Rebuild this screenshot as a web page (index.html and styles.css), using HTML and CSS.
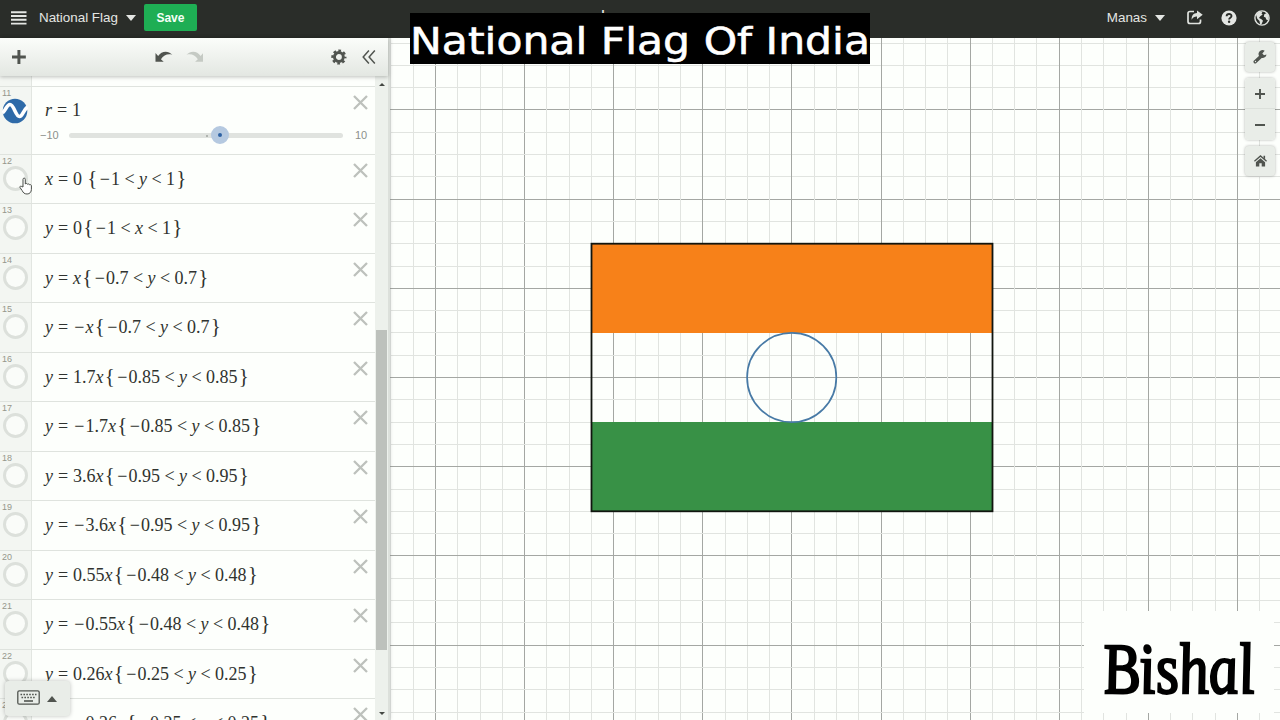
FILE: index.html
```html
<!DOCTYPE html>
<html lang="en">
<head>
  <meta charset="UTF-8">
  <meta name="viewport" content="width=device-width, initial-scale=1.0">
  <title>National Flag</title>
  <link rel="stylesheet" href="styles.css">
</head>
<body>
  <div class="app">
    <!-- Header -->
    <header class="header">
      <div class="header-side">
        <svg class="menu-icon" width="16" height="14" viewBox="0 0 16 14"><path d="M0 1.300h15.500M0 5h15.500M0 8.800h15.500M0 12.600h15.500" stroke="#e4e6e3" stroke-width="1.900"/></svg>
        <span class="graph-title">National Flag</span>
        <span class="caret"></span>
        <button class="save">Save</button>
      </div>
      <span class="brand">desmos</span>
      <div class="header-side account">
        <span class="user">Manas</span>
        <span class="caret"></span>
        <svg class="share-icon" width="16" height="15" viewBox="0 0 16 15"><path d="M7 1.500H3Q1 1.500 1 3.500v8q0 2 2 2h8.500q2 0 2-2V9.500" fill="none" stroke="#dfe2de" stroke-width="1.700"/><path d="M10 .5l5.700 4.300L10 9.300V6.600C7.500 6.500 6 7.300 4.600 9.800 4.600 5.500 6.500 3.300 10 3.100z" fill="#dfe2de"/></svg>
        <svg class="help-icon" width="16" height="16" viewBox="0 0 16 16"><circle cx="8" cy="8" r="7.600" fill="#e4e6e3"/><path d="M5.600 6.200C5.700 3.300 10.500 3.300 10.500 6c0 1.700-2.400 1.700-2.400 3.500" fill="none" stroke="#2a2d29" stroke-width="1.900"/><circle cx="8.100" cy="11.800" r="1.200" fill="#2a2d29"/></svg>
        <svg width="16" height="16" viewBox="0 0 16 16"><circle cx="8" cy="8" r="7.100" fill="none" stroke="#dfe2de" stroke-width="1.400"/><path d="M2 4.500L5 1.500l3.500.3-1 1.700 1.200 1-2.500 1.700L5 8l2.500 1.200 1.500 1.600-1.500 3.400-1.400.3-.6-3.500L3.300 8.700z M10.300 4.200l2.500-1.300 2 3.300-.6 4-2-.6-.6-2-1.800-.8z" fill="#dfe2de"/></svg>
      </div>
    </header>

    <main class="main">
      <!-- Expression list -->
      <section class="panel">
        <div class="toolbar">
          <svg class="tool-add" width="14" height="14" viewBox="0 0 14 14"><path d="M7 0v14M0 7h14" stroke="#50544f" stroke-width="3"/></svg>
          <svg class="tool-undo" width="18" height="12" viewBox="0 0 18 12"><path d="M.5 2v8.800h8.300L6 8.200C9 4 12.500 2.600 17.500 3.700 13-1 6.500 0 3.200 4.900z" fill="#50544f"/></svg>
          <svg class="tool-redo" width="18" height="12" viewBox="0 0 18 12"><path d="M17.500 2v8.800H9.200L12 8.200C9 4 5.500 2.600.5 3.700 5-1 11.500 0 14.800 4.900z" fill="#c5cac4"/></svg>
          <svg class="tool-gear" width="16" height="16" viewBox="0 0 16 16"><circle cx="8" cy="8" r="4.500" fill="none" stroke="#50544f" stroke-width="3"/><circle cx="8" cy="8" r="6.500" fill="none" stroke="#50544f" stroke-width="2.400" stroke-dasharray="2.700 2.405" stroke-dashoffset="1.350"/></svg>
          <svg class="tool-hide" width="14" height="14" viewBox="0 0 14 14"><path d="M7 .5L1.200 7 7 13.500M13 .5L7.200 7l5.800 6.500" fill="none" stroke="#50544f" stroke-width="1.500"/></svg>
        </div>
        <div class="list-wrap">
          <div class="list" id="list">
            <div class="row row-stub"><div class="gutter"></div></div>
            <div class="row row-slider">
              <div class="gutter"><span class="num">11</span>
                <svg class="wave" width="26" height="26" viewBox="0 0 26 26"><circle cx="13" cy="13" r="12.300" fill="#2e6aa8"/><path d="M.5 15C4 11.500 5 6.500 8 6.500c4 0 5.500 12 9.500 12 3 0 3.500-6 8-9.500" fill="none" stroke="#fff" stroke-width="3.600"/></svg>
              </div>
              <div class="slider-body">
                <div class="math"><i>r</i><b class="eq">=</b>1</div>
                <div class="slider">
                  <span class="limit">−10</span>
                  <span class="track"><span class="zero"></span><span class="thumb"></span></span>
                  <span class="limit">10</span>
                </div>
              </div>
              <svg class="close" width="15" height="15" viewBox="0 0 15 15"><path d="M1 1l13 13M14 1L1 14"/></svg>
            </div>
          </div>
          <div class="scrollbar"><span class="arrow-up"></span><span class="scroll-thumb"></span><span class="arrow-down"></span></div>
        </div>
        <div class="keypad">
          <svg width="24" height="15" viewBox="0 0 24 15"><rect x=".8" y=".8" width="21.400" height="13.400" rx="1.500" fill="none" stroke="#50544f" stroke-width="1.300"/><path d="M3.500 4.500h16M4.500 7.500h14" stroke="#50544f" stroke-width="1.700" stroke-dasharray="1.600 1.300"/><path d="M7 11h9" stroke="#50544f" stroke-width="1.600"/></svg>
          <span class="keypad-up"></span>
        </div>
      </section>

      <!-- Graph paper -->
      <section class="graph">
        <svg class="plot" width="890" height="682" viewBox="390 38 890 682">
          <g id="grid"></g>
          <rect x="591.500" y="243.500" width="401" height="89.500" fill="#f78119"/>
          <rect x="591.500" y="422" width="401" height="89.500" fill="#389146"/>
          <rect x="591.500" y="243.700" width="401" height="267.600" fill="none" stroke="#11150f" stroke-width="1.800"/>
          <circle cx="791.700" cy="377.500" r="44.600" fill="none" stroke="#487aa6" stroke-width="1.700"/>
        </svg>
        <div class="graph-tools">
          <div class="tool-box"><svg width="14" height="14" viewBox="0 0 14 14"><path d="M2.200 11.800L8.400 6" stroke="#50544f" stroke-width="3.400" stroke-linecap="round"/><path d="M11.700.7A4 4 0 1 0 13.500 4.500L11 5.200 9.300 3.500z" fill="#50544f"/><circle cx="2.500" cy="11.500" r=".7" fill="#e9ede8"/></svg></div>
          <div class="tool-box zoom">
            <svg width="10" height="10" viewBox="0 0 10 10"><path d="M5 0v10M0 5h10" stroke="#50544f" stroke-width="1.900"/></svg>
            <svg width="10" height="10" viewBox="0 0 10 10"><path d="M0 5h10" stroke="#50544f" stroke-width="2"/></svg>
          </div>
          <div class="tool-box"><svg width="13" height="12" viewBox="0 0 13 12"><path d="M.4 6.300L6.500 1l6.100 5.300" fill="none" stroke="#50544f" stroke-width="1.400"/><path d="M9.500.8h1.600v3.700L9.500 3z M6.500 3.200l4.600 4V11.500H7.700V8.300H5.300v3.200H1.900V7.200z" fill="#50544f"/></svg></div>
        </div>
      </section>
    </main>

    <svg class="cursor" width="14" height="18" viewBox="0 0 14 18"><path d="M4 10V2.400c0-1.800 2.300-1.800 2.300 0V7c.4-.8 2-.8 2.200.3.600-.7 1.900-.4 2 .5.700-.5 1.900-.1 1.900 1v3.500c0 2.600-1.600 4.700-4.300 4.700-2.800 0-3.900-1.300-5-3.500L1 10.500c-.5-1.200.8-1.800 1.600-1z" fill="#fff" stroke="#4b4f4a" stroke-width="1"/></svg>

    <!-- Video captions -->
    <div class="caption">
      <svg width="460" height="51" viewBox="0 0 460 51"><text x="0" y="40.500" textLength="460" lengthAdjust="spacingAndGlyphs">National Flag Of India</text></svg>
    </div>
    <div class="signature">
      <svg width="190" height="102" viewBox="0 0 190 102"><text transform="translate(21 82) skewX(7)" x="0" y="0" textLength="152" lengthAdjust="spacingAndGlyphs">Bishal</text></svg>
    </div>
  </div>

  <script>
    const expressions = [
      "x=0 {-1<y<1}",
      "y=0{-1<x<1}",
      "y=x{-0.7<y<0.7}",
      "y=-x{-0.7<y<0.7}",
      "y=1.7x{-0.85<y<0.85}",
      "y=-1.7x{-0.85<y<0.85}",
      "y=3.6x{-0.95<y<0.95}",
      "y=-3.6x{-0.95<y<0.95}",
      "y=0.55x{-0.48<y<0.48}",
      "y=-0.55x{-0.48<y<0.48}",
      "y=0.26x{-0.25<y<0.25}",
      "y=-0.26x{-0.25<y<0.25}"
    ];

    const symbols = {
      "=": '<b class="eq">=</b>',
      "<": '<b class="lt">&lt;</b>',
      "-": '<b class="neg">−</b>',
      "{": '<b class="brace">{</b>',
      "}": '<b class="brace">}</b>',
      " ": '<b class="gap"></b>',
      "x": "<i>x</i>",
      "y": "<i>y</i>"
    };

    const list = document.getElementById("list");
    expressions.forEach((text, index) => {
      const math = [...text].map(c => symbols[c] || c).join("");
      list.insertAdjacentHTML("beforeend", `
        <div class="row">
          <div class="gutter"><span class="num">${index + 12}</span><span class="ring"></span></div>
          <div class="math">${math}</div>
          <svg class="close" width="15" height="15" viewBox="0 0 15 15"><path d="M1 1l13 13M14 1L1 14"/></svg>
        </div>`);
    });

    // every fourth line is a major one
    let lines = "";
    for (let i = -18; i <= 22; i++) {
      const kind = i % 4 === 0 ? "major" : "minor";
      const x = Math.round(791.4 + i * 22.275) + 0.5;
      const y = Math.floor(377.5 + i * 22.3) + 0.5;
      lines += `<path class="${kind}" d="M${x} 38V720"/>`;
      lines += `<path class="${kind}" d="M390 ${y}H1280"/>`;
    }
    document.getElementById("grid").innerHTML = lines;
  </script>
</body>
</html>
```
FILE: styles.css
```css
* {
  box-sizing: border-box;
}
body {
  margin: 0;
  font-family: "Liberation Sans", Arial, sans-serif;
  background: #fdfffc;
}
.app {
  position: relative;
  display: flex;
  flex-direction: column;
  width: 1280px;
  height: 720px;
  overflow: hidden;
}
.header {
  display: flex;
  justify-content: space-between;
  height: 38px;
  flex: none;
  background: #2a2d29;
  color: #e4e6e3;
  font-size: 13.4px;
}
.header-side {
  display: flex;
  align-items: center;
  width: 400px;
  padding: 0 10px 3px 11px;
}
.menu-icon {
  margin-right: 12px;
}
.caret {
  border: 5px solid transparent;
  border-top: 6px solid #e4e6e3;
  border-bottom: 0;
  margin-left: 8px;
}
.save {
  width: 53px;
  height: 27px;
  margin-left: 8px;
  padding: 0;
  border: 0;
  border-radius: 2px;
  background: #1eae54;
  color: #f4fff6;
  font: bold 12px "Liberation Sans", Arial, sans-serif;
}
.brand {
  padding-top: 7px;
  font-size: 18px;
  letter-spacing: 4.5px;
}
.account {
  justify-content: flex-end;
}
.share-icon {
  margin-left: 22px;
}
.help-icon {
  margin: 0 17px 0 18px;
}
.main {
  display: flex;
  flex: 1;
  min-height: 0;
}
.panel {
  position: relative;
  z-index: 1;
  display: flex;
  flex-direction: column;
  width: 390px;
  background: #fdfffc;
  border-right: 2px solid #dce0db;
  box-shadow: 0 0 4px rgba(0, 0, 0, 0.16);
}
.toolbar {
  display: flex;
  align-items: center;
  flex: none;
  height: 38px;
  padding: 0 12px;
  background: linear-gradient(#fbfdfa, #e3e7e2);
  box-shadow: 0 1px 4px rgba(0, 0, 0, 0.25);
  z-index: 1;
}
.tool-undo {
  margin-left: 129px;
}
.tool-redo {
  margin-left: 13px;
}
.tool-gear {
  margin-left: 128px;
}
.tool-hide {
  margin-left: 15px;
}
.list-wrap {
  display: flex;
  flex: 1;
  min-height: 0;
}
.list {
  width: 375px;
  overflow: hidden;
}
.row {
  display: flex;
  height: 49.5px;
  border-bottom: 1px solid #dfe3de;
}
.row-stub {
  height: 11px;
}
.row-slider {
  height: 67.5px;
}
.gutter {
  display: flex;
  flex-direction: column;
  width: 32px;
  flex: none;
  background: #f3f6f2;
  border-right: 1px solid #e2e6e1;
}
.num {
  height: 10px;
  padding: 1px 0 0 2px;
  font-size: 9px;
  line-height: 11px;
  color: #96968c;
}
.ring {
  width: 25px;
  height: 25px;
  margin: 1px 0 0 3px;
  border: 3px solid #dce0db;
  border-radius: 50%;
  background: #fafcf9;
}
.wave {
  margin: 1px 0 0 2px;
}
.math {
  flex: 1;
  padding-left: 13px;
  font: 18px/49px "Liberation Serif", "Times New Roman", serif;
  color: #30332f;
  white-space: nowrap;
}
.math b {
  display: inline-block;
  font-weight: normal;
  text-align: center;
}
.math .eq {
  width: 20px;
}
.math .lt {
  width: 19px;
}
.math .neg {
  width: 12.5px;
}
.math .brace {
  width: 12.5px;
  font-size: 21px;
  line-height: 20px;
}
.math .gap {
  width: 4px;
}
.close {
  flex: none;
  margin: 8px 7px 0 0;
  fill: none;
  stroke: #bdc1bc;
  stroke-width: 2.3;
}
.slider-body {
  flex: 1;
  min-width: 0;
}
.slider-body .math {
  height: 39px;
  line-height: 46px;
}
.slider {
  display: flex;
  align-items: center;
  width: 343px;
  padding-left: 8px;
  height: 18px;
}
.limit {
  flex: none;
  width: 29px;
  font-size: 11px;
  color: #8c908b;
}
.track {
  position: relative;
  width: 274px;
  height: 5px;
  margin-right: 12px;
  border-radius: 3px;
  background: #e0e3df;
  flex: none;
}
.thumb {
  position: absolute;
  left: 142px;
  top: -7px;
  width: 18px;
  height: 18px;
  border: 7px solid #b5c9e0;
  border-radius: 50%;
  background: #2d62a3;
}
.zero {
  position: absolute;
  left: 137px;
  top: 2px;
  width: 2px;
  height: 2px;
  background: #b0b4af;
}
.scrollbar {
  display: flex;
  flex-direction: column;
  align-items: center;
  width: 13px;
  padding: 7px 0 5px;
  background: #edf1ec;
}
.arrow-up {
  border: 3px solid transparent;
  border-top: 0;
  border-bottom: 3px solid #444843;
}
.arrow-down {
  margin-top: auto;
  border: 3px solid transparent;
  border-bottom: 0;
  border-top: 3px solid #444843;
}
.scroll-thumb {
  width: 11px;
  height: 320px;
  margin-top: 244px;
  background: #bdc1bc;
}
.keypad {
  position: absolute;
  left: 5px;
  bottom: 4px;
  display: flex;
  align-items: center;
  width: 65px;
  height: 35px;
  padding: 0 0 3px 12px;
  border-radius: 4px;
  background: #e9ede8;
  box-shadow: 0 0 4px rgba(0, 0, 0, 0.25);
}
.keypad-up {
  margin: 3px 0 0 6px;
  border: 5px solid transparent;
  border-top: 0;
  border-bottom: 6px solid #50544f;
}
.graph {
  position: relative;
  flex: 1;
}
.plot {
  display: block;
}
.major,
.minor {
  fill: none;
  stroke: #a4a7a3;
}
.minor {
  stroke: #e1e4e0;
}
.graph-tools {
  position: absolute;
  right: 5px;
  top: 4px;
  display: flex;
  flex-direction: column;
  gap: 6px;
}
.tool-box {
  display: flex;
  align-items: center;
  justify-content: center;
  width: 30px;
  height: 30px;
  border-radius: 4px;
  background: #e9ede8;
  box-shadow: 0 0 3px rgba(0, 0, 0, 0.3);
}
.zoom {
  flex-direction: column;
  height: 62px;
  gap: 21px;
  background: linear-gradient(#e9ede8 30px, #dce0db 30px, #dce0db 31px, #e9ede8 31px);
}
.cursor {
  position: absolute;
  left: 19px;
  top: 177px;
  z-index: 2;
}
.caption {
  position: absolute;
  left: 410px;
  top: 13px;
  z-index: 2;
  height: 51px;
  background: #000;
}
.caption text {
  font: 38px "DejaVu Sans", sans-serif;
  fill: #fff;
  stroke: #fff;
  stroke-width: 0.6;
}
.signature {
  position: absolute;
  left: 1084px;
  top: 611px;
  z-index: 2;
  height: 102px;
  background: #fdfffc;
}
.signature text {
  font: italic 72px "Liberation Serif", serif;
  fill: #000;
  stroke: #000;
  stroke-width: 2.4;
}
```
